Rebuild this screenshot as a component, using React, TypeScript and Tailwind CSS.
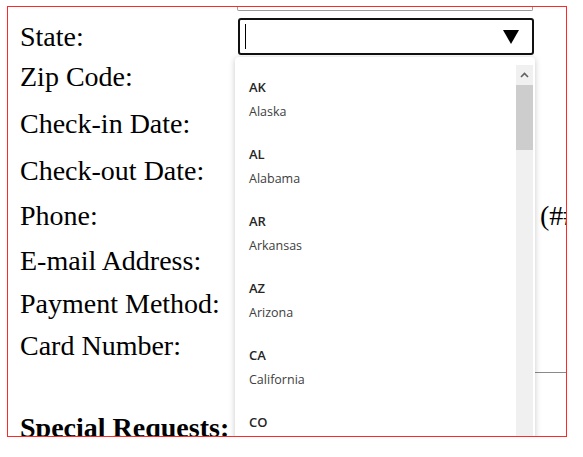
import { ReactNode } from "react";

const STATES = [
  { code: "AK", name: "Alaska" },
  { code: "AL", name: "Alabama" },
  { code: "AR", name: "Arkansas" },
  { code: "AZ", name: "Arizona" },
  { code: "CA", name: "California" },
  { code: "CO", name: "Colorado" },
  { code: "CT", name: "Connecticut" },
];

function Row({ label, className, children }: { label: ReactNode; className: string; children?: ReactNode }) {
  return (
    <div className={`flex items-center h-[36px] ${className}`}>
      <div className="w-[217px] pl-[12px] shrink-0 whitespace-nowrap">{label}</div>
      {children}
    </div>
  );
}

function StateDropdown() {
  return (
    <div className="absolute left-[227px] top-[50px] w-[300px] h-[420px] bg-white rounded-t-[4px] shadow-[0_1px_6px_rgba(0,0,0,0.22)] flex font-['Open_Sans',sans-serif]">
      {/* list */}
      <ul className="flex-1 pl-[14px]">
        {STATES.map((s) => (
          <li key={s.code} className="h-[67px] pt-[21px]">
            <div className="text-[13px] leading-[18px] font-semibold text-[#262626]">{s.code}</div>
            <div className="mt-[8px] text-[12.5px] leading-[16px] text-[#404040]">{s.name}</div>
          </li>
        ))}
      </ul>
      {/* scrollbar */}
      <div className="w-[17px] mt-[8px] mr-[2px] bg-[#f0f0f0] flex flex-col items-center">
        <div className="h-[20px] flex items-center justify-center">
          <svg width="9" height="6" viewBox="0 0 9 6">
            <path d="M1 5 L4.5 1.5 L8 5" fill="none" stroke="#606060" strokeWidth="1.6" />
          </svg>
        </div>
        <div className="w-[17px] h-[65px] bg-[#cdcdcd]" />
      </div>
    </div>
  );
}

export default function App() {
  return (
    <div className="w-[583px] h-[457px] bg-white pt-[6px] pl-[7px]">
      <div className="relative w-[560px] h-[431px] border border-[#ff2828] overflow-hidden font-['Liberation_Serif',serif] text-[28px] text-black">
        {/* bottom of the previous input */}
        <div className="ml-[229px] w-[296px] h-[4px] border-x border-b border-[#9a9a9a] rounded-b-[2px]" />

        <div className="flex items-center h-[37px] mt-[7px]">
          <div className="w-[217px] pl-[12px] shrink-0">State:</div>
          <div className="ml-[13px] w-[296px] h-[37px] border-2 border-[#111] rounded-[3px] flex items-center justify-between pl-[5px] pr-[13px]">
            <span className="w-px h-[25px] bg-black" />
            <svg width="16" height="14" viewBox="0 0 16 14">
              <path d="M0 0 H16 L8 14 Z" fill="#000" />
            </svg>
          </div>
        </div>

        <Row label="Zip Code:" className="mt-[4px]" />
        <Row label="Check-in Date:" className="mt-[11px]" />
        <Row label="Check-out Date:" className="mt-[11px]" />
        <Row label="Phone:" className="mt-[9px] relative">
          <span className="absolute left-[532px] whitespace-nowrap">(###) ###-####</span>
        </Row>
        <Row label="E-mail Address:" className="mt-[9px]" />
        <Row label="Payment Method:" className="mt-[7px]" />
        <Row label="Card Number:" className="mt-[6px]" />

        {/* special requests textarea edge */}
        <div className="ml-[229px] mt-[8px] w-[400px] h-[38px] border-t border-[#8a8a8a]" />

        <Row label={<b>Special Requests:</b>} className="mt-0" />

        <StateDropdown />
      </div>
    </div>
  );
}
